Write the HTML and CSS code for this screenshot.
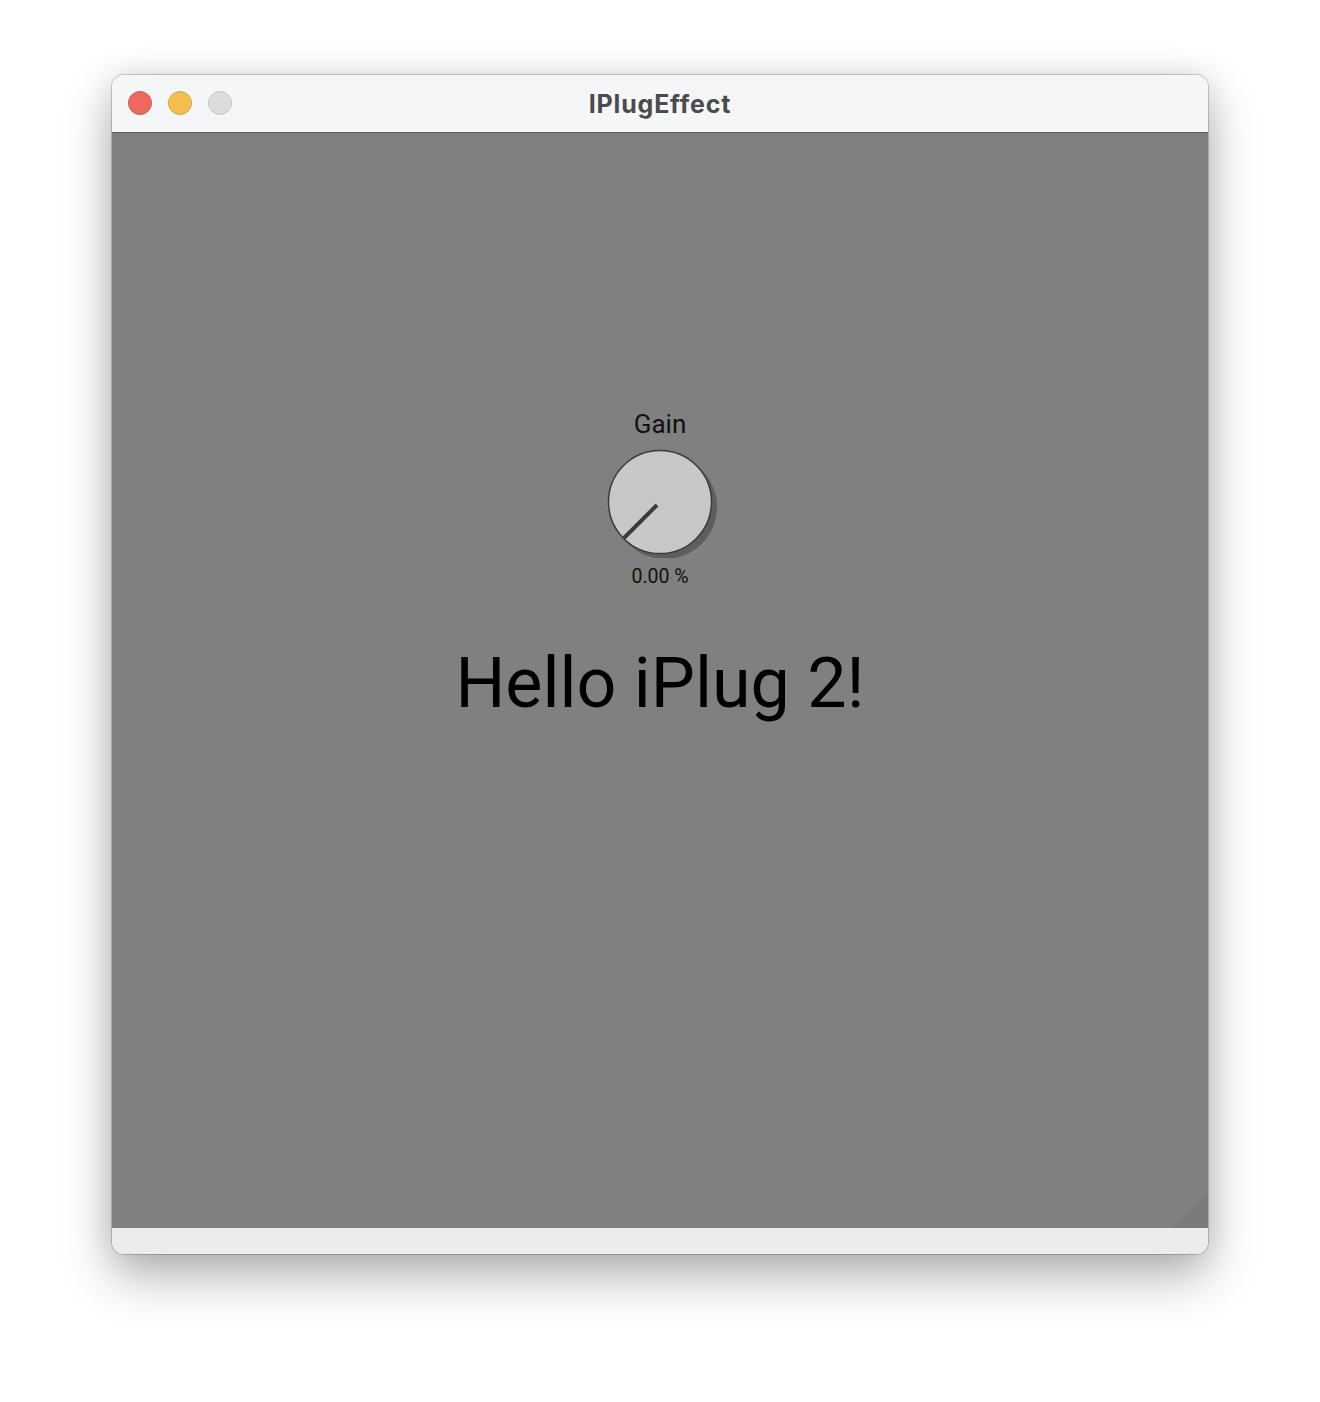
FILE: index.html
```html
<!DOCTYPE html>
<html>
<head>
<meta charset="utf-8">
<link rel="stylesheet" href="styles.css">
</head>
<body>
<div class="window">
  <div class="titlebar">
    <div class="lights">
      <span class="light red"></span>
      <span class="light yellow"></span>
      <span class="light gray"></span>
    </div>
    <div class="title">IPlugEffect</div>
  </div>
  <div class="content">
    <div class="knob-label">Gain</div>
    <svg class="knob" width="120" height="112" viewBox="0 0 120 112">
      <circle cx="65" cy="61" r="52" fill="#5e5e5e"/>
      <circle cx="60" cy="56" r="51.5" fill="#c8c8c8" stroke="#3c3c3c" stroke-width="1.5"/>
      <line x1="57" y1="59" x2="24" y2="92" stroke="#3c3c3c" stroke-width="4"/>
    </svg>
    <div class="knob-value">0.00 %</div>
    <div class="hello">Hello iPlug 2!</div>
    <div class="grip"></div>
  </div>
  <div class="bottombar"></div>
</div>
</body>
</html>
```

FILE: styles.css
```css
html, body {
  margin: 0;
  padding: 0;
  background: #ffffff;
}
body {
  padding: 75px 0 0 112px;
  height: 1402px;
  box-sizing: border-box;
}
.window {
  width: 1096px;
  height: 1179px;
  border-radius: 12px;
  overflow: hidden;
  display: flex;
  flex-direction: column;
  box-shadow: 0 0 0 1px rgba(0,0,0,0.18), 0 22px 50px rgba(0,0,0,0.30), 0 0 30px rgba(0,0,0,0.10);
}
.titlebar {
  height: 57px;
  flex: none;
  background: #f5f6f8;
  border-bottom: 1px solid #5b5b5b;
  display: flex;
  align-items: center;
  justify-content: center;
  position: relative;
}
.lights {
  position: absolute;
  left: 16px;
  top: 16px;
  display: flex;
  gap: 16px;
}
.light {
  width: 22px;
  height: 22px;
  border-radius: 50%;
  box-sizing: content-box;
}
.red { background: #ee6a5f; border: 1px solid #d5584c; }
.yellow { background: #f5bf4f; border: 1px solid #d7a445; }
.gray { background: #dcdcde; border: 1px solid #c6c6c8; }
.title {
  font-family: "Inter", "Liberation Sans", sans-serif;
  font-weight: 700;
  font-size: 25px;
  color: #4b4b4d;
  letter-spacing: 0.8px;
}
.content {
  flex: 1;
  background: #808080;
  display: flex;
  flex-direction: column;
  align-items: center;
  position: relative;
  font-family: "Roboto", "Liberation Sans", sans-serif;
  color: #000;
}
.knob-label {
  margin-top: 277px;
  font-size: 26px;
  line-height: 28px;
  color: #111;
}
.knob {
  display: block;
  margin-top: 8px;
}
.knob-value {
  margin-top: 8px;
  font-size: 19.5px;
  line-height: 22px;
  color: #111;
}
.hello {
  margin-top: 55px;
  font-size: 70px;
  line-height: 80px;
  color: #000;
}
.grip {
  position: absolute;
  right: 0;
  bottom: 0;
  width: 38px;
  height: 36px;
  background: linear-gradient(to bottom right, transparent 50%, rgba(0,0,0,0.04) 50%);
}
.bottombar {
  height: 26px;
  flex: none;
  background: #ececec;
}
```
